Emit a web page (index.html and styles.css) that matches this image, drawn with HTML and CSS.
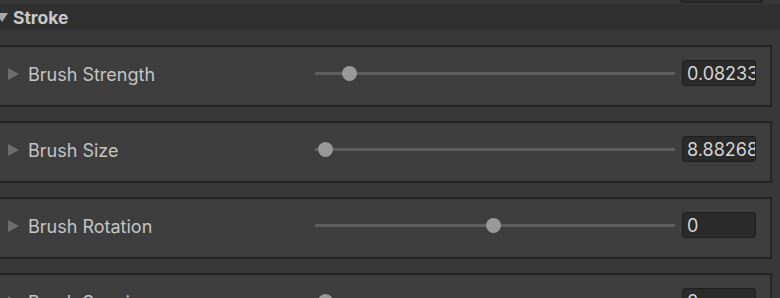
FILE: index.html
```html
<!DOCTYPE html>
<html>
<head>
<meta charset="utf-8">
<link rel="stylesheet" href="styles.css">
</head>
<body>
<div class="top"><div class="stub"></div></div>
<div class="header"><span class="tri-down"></span><span class="title">Stroke</span></div>
<div class="list">
  <div class="box">
    <div class="row">
      <span class="tri-right"></span>
      <span class="label">Brush Strength</span>
      <div class="slider"><div class="track"></div><div class="knob" style="left: 9.7%"></div></div>
      <div class="field">0.08233</div>
    </div>
  </div>
  <div class="box">
    <div class="row">
      <span class="tri-right"></span>
      <span class="label">Brush Size</span>
      <div class="slider"><div class="track"></div><div class="knob" style="left: 2.8%"></div></div>
      <div class="field">8.88268</div>
    </div>
  </div>
  <div class="box">
    <div class="row">
      <span class="tri-right"></span>
      <span class="label">Brush Rotation</span>
      <div class="slider"><div class="track"></div><div class="knob" style="left: 49.7%"></div></div>
      <div class="field">0</div>
    </div>
  </div>
  <div class="box">
    <div class="row">
      <span class="tri-right"></span>
      <span class="label">Brush Spacing</span>
      <div class="slider"><div class="track"></div><div class="knob" style="left: 2.8%"></div></div>
      <div class="field">0</div>
    </div>
  </div>
</div>
</body>
</html>
```

FILE: styles.css
```css
html, body {
  margin: 0;
  padding: 0;
  background: #383838;
  overflow: hidden;
  width: 780px;
  height: 298px;
  font-family: Inter, "Noto Sans", sans-serif;
}
.top {
  height: 4px;
  display: flex;
  justify-content: flex-end;
  padding-right: 17px;
}
.stub {
  width: 81px;
  height: 2px;
  background: #2a2a2a;
  border: 1px solid #1f1f1f;
  border-top: none;
  border-radius: 0 0 3px 3px;
}
.header {
  height: 26px;
  background: #303030;
  display: flex;
  align-items: center;
}
.tri-down {
  width: 0;
  height: 0;
  margin-left: -4px;
  margin-top: 1px;
  border-left: 6px solid transparent;
  border-right: 6px solid transparent;
  border-top: 9px solid #a8a8a8;
}
.title {
  margin-left: 5px;
  font-weight: 700;
  font-size: 17.5px;
  color: #c8c8c8;
}
.list {
  padding-top: 15px;
  display: flex;
  flex-direction: column;
  gap: 14px;
}
.box {
  margin-left: -2px;
  width: 770px;
  height: 58px;
  flex: none;
  background: #3e3e3e;
  border: 2px solid #242424;
  box-sizing: content-box;
}
.row {
  margin-top: 13px;
  padding-left: 8px;
  height: 26px;
  display: grid;
  grid-template-columns: 20px 287px 360px 74px;
  align-items: center;
}
.tri-right {
  width: 0;
  height: 0;
  margin-top: 1px;
  border-top: 6.5px solid transparent;
  border-bottom: 6.5px solid transparent;
  border-left: 11px solid #6e6e6e;
}
.label {
  font-size: 18px;
  color: #c4c4c4;
  white-space: nowrap;
  margin-top: 2px;
}
.slider {
  position: relative;
  height: 26px;
}
.track {
  position: absolute;
  left: 0;
  right: 0;
  top: 12px;
  height: 3px;
  background: #5e5e5e;
}
.knob {
  position: absolute;
  top: 6px;
  width: 15px;
  height: 15px;
  margin-left: -7.5px;
  border-radius: 50%;
  background: #999999;
}
.field {
  margin-left: 7px;
  width: 74px;
  height: 26px;
  box-sizing: border-box;
  background: #2a2a2a;
  border: 1px solid #1f1f1f;
  border-radius: 3px;
  color: #d4d4d4;
  font-size: 18px;
  line-height: 25px;
  padding-left: 4px;
  overflow: hidden;
  white-space: nowrap;
}
```
